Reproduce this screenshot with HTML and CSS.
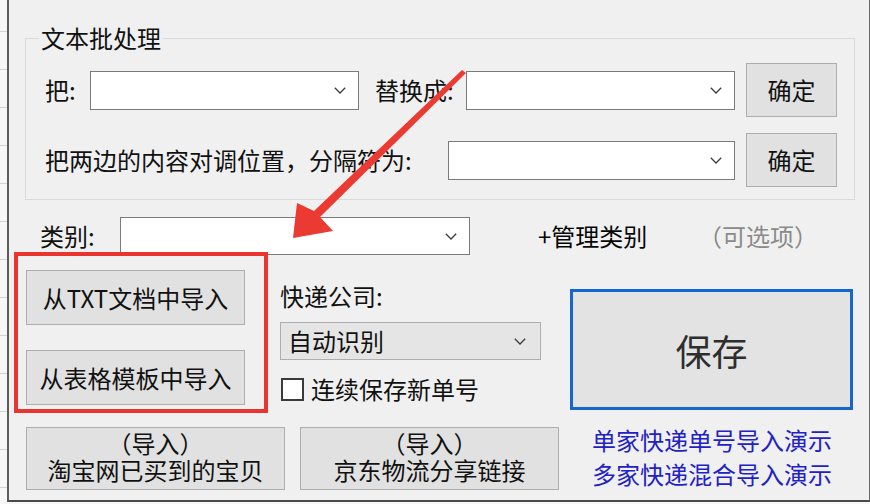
FILE: index.html
```html
<!DOCTYPE html>
<html lang="zh-CN">
<head>
<meta charset="utf-8">
<title>文本批处理</title>
<link rel="stylesheet" href="styles.css">
</head>
<body>
<div class="window">
  <fieldset class="group">
    <legend class="group-title">文本批处理</legend>
    <div class="row row-first">
      <span class="label label-ba">把:</span>
      <div class="combo combo-a"><svg class="chev" viewBox="0 0 12 7"><polyline points="0.8,0.8 6,6 11.2,0.8"/></svg></div>
      <span class="label label-replace">替换成:</span>
      <div class="combo combo-b"><svg class="chev" viewBox="0 0 12 7"><polyline points="0.8,0.8 6,6 11.2,0.8"/></svg></div>
      <button class="btn btn-ok">确定</button>
    </div>
    <div class="row row-second">
      <span class="label label-swap">把两边的内容对调位置，分隔符为:</span>
      <div class="combo combo-c"><svg class="chev" viewBox="0 0 12 7"><polyline points="0.8,0.8 6,6 11.2,0.8"/></svg></div>
      <button class="btn btn-ok">确定</button>
    </div>
  </fieldset>

  <div class="cat-row">
    <span class="label cat-label">类别:</span>
    <div class="combo combo-cat"><svg class="chev" viewBox="0 0 12 7"><polyline points="0.8,0.8 6,6 11.2,0.8"/></svg></div>
    <span class="manage">+管理类别</span>
    <span class="optional">（可选项）</span>
  </div>

  <div class="main-row">
    <div class="col-import">
      <button class="btn btn-import">从TXT文档中导入</button>
      <button class="btn btn-import">从表格模板中导入</button>
    </div>
    <div class="col-courier">
      <span class="label courier-label">快递公司:</span>
      <div class="combo combo-ro"><span class="combo-text">自动识别</span><svg class="chev" viewBox="0 0 12 7"><polyline points="0.8,0.8 6,6 11.2,0.8"/></svg></div>
      <div class="check-row"><span class="checkbox"></span><span>连续保存新单号</span></div>
    </div>
    <button class="btn btn-save">保存</button>
  </div>

  <div class="bottom-row">
    <button class="btn btn-two"><span class="two-line">（导入）</span><span class="two-line">淘宝网已买到的宝贝</span></button>
    <button class="btn btn-two btn-two-b"><span class="two-line">（导入）</span><span class="two-line">京东物流分享链接</span></button>
    <div class="links">
      <a class="link">单家快递单号导入演示</a>
      <a class="link">多家快递混合导入演示</a>
    </div>
  </div>

  <div class="annot-box"></div>
  <svg class="annot-arrow" viewBox="280 60 200 185">
    <polygon points="293,238 297,203 314,211 462,70 466,73 320,217 333,231"/>
  </svg>
</div>
</body>
</html>
```

FILE: styles.css
```css
html, body {
  margin: 0;
  padding: 0;
}

body {
  width: 870px;
  height: 504px;
  overflow: hidden;
  background-color: #f7f7f7;
  background-image: repeating-linear-gradient(to bottom, transparent 0, transparent 31px, #d2d2d2 31px, #d2d2d2 32px, transparent 32px, transparent 38px);
  font-family: "Noto Sans CJK SC", "Noto Sans", sans-serif;
  color: #111111;
  font-size: 24px;
}

.window {
  position: relative;
  margin-left: 7px;
  width: 863px;
  height: 502px;
  box-sizing: border-box;
  border-left: 2px solid #5c5c5c;
  border-right: 1px solid #6a6a6a;
  border-bottom: 2px solid #4a4a4a;
  background: #f0f0f0;
  overflow: hidden;
}

/* group box */
.group {
  margin: 25px 0 0 16px;
  padding: 0 0 12px 19px;
  width: 830px;
  box-sizing: border-box;
  border: 1px solid #d9d9d9;
  min-inline-size: 0;
}

.group-title {
  margin-left: -6px;
  padding: 0 2px;
  font-size: 24px;
  line-height: 26px;
}

.row {
  display: flex;
  align-items: center;
  height: 54px;
}

.row-first {
  margin-top: 12px;
}

.row-second {
  margin-top: 16px;
}

.label {
  display: inline-block;
  line-height: 26px;
  white-space: nowrap;
}

.label-ba { width: 45px; }
.label-replace { width: 91px; margin-left: 16px; }
.label-swap { width: 403px; }

.combo {
  display: flex;
  align-items: center;
  justify-content: flex-end;
  height: 39px;
  box-sizing: border-box;
  padding-right: 12px;
  background: #ffffff;
  border: 1px solid #7a7a7a;
}

.combo-a, .combo-b { width: 269px; }
.combo-c { width: 287px; }

.chev {
  width: 12px;
  height: 7px;
  flex: none;
}

.chev polyline {
  fill: none;
  stroke: #3c3c3c;
  stroke-width: 1.3;
}

.btn {
  display: block;
  margin: 0;
  padding: 0;
  box-sizing: border-box;
  font-family: inherit;
  font-size: 24px;
  color: #111111;
  background: #e1e1e1;
  border: 1px solid #adadad;
  border-radius: 0;
}

.btn-ok {
  width: 91px;
  height: 54px;
  margin-left: 11px;
  line-height: 26px;
}

/* category row */
.cat-row {
  display: flex;
  align-items: center;
  margin-top: 17px;
  padding-left: 31px;
  height: 38px;
}

.cat-label { width: 80px; }

.combo-cat {
  width: 350px;
  height: 38px;
}

.manage {
  width: 160px;
  margin-left: 68px;
  line-height: 26px;
  color: #050505;
  white-space: nowrap;
}

.optional {
  color: #8a8a8a;
  line-height: 26px;
  white-space: nowrap;
}

/* main row */
.main-row {
  display: flex;
  align-items: flex-start;
  margin-top: 15px;
  padding-left: 17px;
}

.col-import {
  display: flex;
  flex-direction: column;
  gap: 25px;
  width: 219px;
}

.btn-import {
  width: 219px;
  height: 55px;
  line-height: 26px;
}

.col-courier {
  display: flex;
  flex-direction: column;
  align-items: flex-start;
  width: 261px;
  margin-left: 35px;
}

.courier-label {
  margin-top: 14px;
  line-height: 24px;
}

.combo-ro {
  margin-top: 14px;
  width: 261px;
  height: 38px;
  justify-content: space-between;
  padding-left: 7px;
  padding-right: 14px;
  background: #e5e5e5;
  border-color: #adadad;
}

.combo-text {
  line-height: 26px;
}

.check-row {
  display: flex;
  align-items: center;
  gap: 7px;
  margin-top: 17px;
  height: 24px;
  margin-left: 1px;
  line-height: 24px;
  white-space: nowrap;
}

.checkbox {
  display: block;
  width: 23px;
  height: 23px;
  box-sizing: border-box;
  border: 2px solid #3a3a3a;
  background: #ffffff;
}

.btn-save {
  margin-left: 29px;
  margin-top: 19px;
  width: 283px;
  height: 121px;
  background: #e3e3e3;
  border: 3px solid #1467d0;
  font-size: 36px;
  color: #2e2e2e;
  line-height: 40px;
}

/* bottom row */
.bottom-row {
  display: flex;
  align-items: flex-start;
  margin-top: 17px;
  padding-left: 17px;
}

.btn-two {
  display: flex;
  flex-direction: column;
  align-items: center;
  justify-content: center;
  width: 259px;
  height: 63px;
  padding-bottom: 5px;
}

.two-line {
  display: block;
  line-height: 27px;
  white-space: nowrap;
}

.btn-two-b {
  margin-left: 15px;
}

.links {
  display: flex;
  flex-direction: column;
  margin-left: 33px;
  margin-top: -4px;
}

.link {
  display: block;
  line-height: 34px;
  color: #1f22c4;
  text-decoration: none;
  white-space: nowrap;
}

/* annotation overlays */
.annot-box {
  position: absolute;
  left: 5px;
  top: 252px;
  width: 254px;
  height: 161px;
  box-sizing: border-box;
  border: 4px solid #e8352f;
  pointer-events: none;
}

.annot-arrow {
  position: absolute;
  left: 271px;
  top: 60px;
  width: 200px;
  height: 185px;
  pointer-events: none;
}

.annot-arrow polygon {
  fill: #ea3a32;
}
```
